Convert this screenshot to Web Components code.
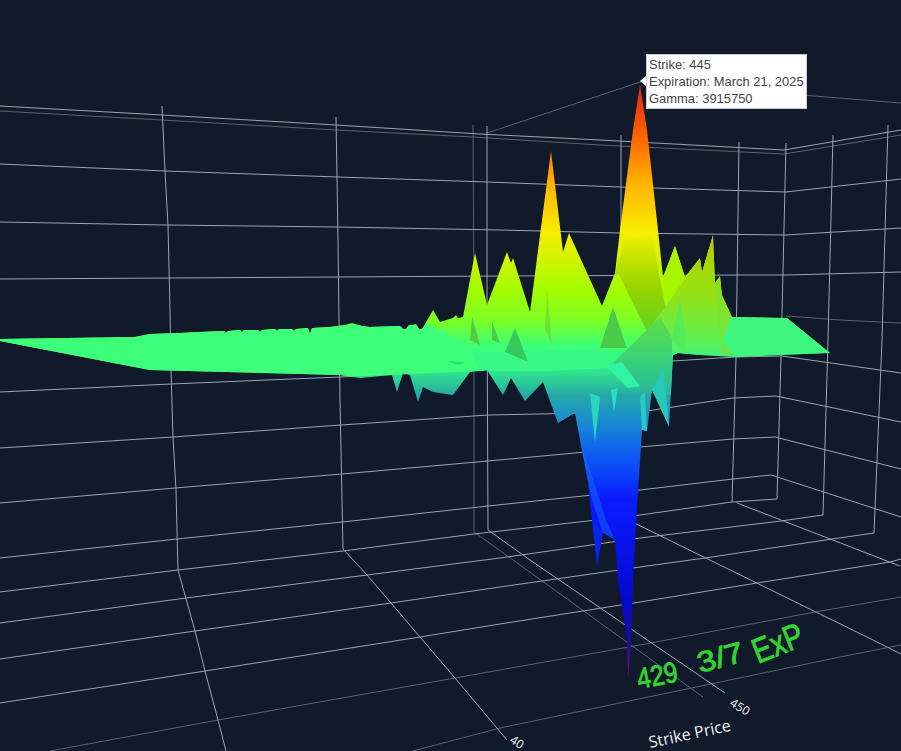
<!DOCTYPE html>
<html>
<head>
<meta charset="utf-8">
<title>Gamma surface</title>
<style>
    html, body { margin: 0; padding: 0; background: #101a2a; }
</style>
</head>
<body>

<plot-scene>
    <plot-grid></plot-grid>
    <plot-mesh></plot-mesh>
    <axis-labels></axis-labels>
    <ink-note></ink-note>
    <hover-tip>
        <div>Strike: 445</div>
        <div>Expiration: March 21, 2025</div>
        <div>Gamma: 3915750</div>
    </hover-tip>
</plot-scene>

<script>
class PlotScene extends HTMLElement {

    constructor() {
        super();
        this.shadow = this.attachShadow({ mode: 'open' });
    }

    connectedCallback() {
        this.shadow.innerHTML =
        `
        <style>
            :host{
                background-color: #101a2a;
                display: block;
                height: 751px;
                overflow: hidden;
                position: relative;
                width: 901px;
            }
        </style>
        <slot></slot>
        `;
    }
}

// every line of the 3d box, as [x,y] runs across the canvas
const BRIGHT_LINES = [
    // left wall, verticals
    "162,106 165,171 168,225 170,310 171,370 173,437 176,490 178,570",
    "336,117 338,240 340,400 341,450 343,549",
    "487,126 487,300 488,530",
    // right wall, verticals
    "621,135 621,505",
    "739,142 736,357 732,502",
    "786,143 781,357 777,499",
    "833,135 828,340 823,515",
    "888,125 882,340 874,533",
    // rows on the walls
    "0,106 162,115 336,125 480,134 600,140 784,150 901,130",
    "0,164 165,171 338,177 487,182 620,187 786,192 901,179",
    "0,222 165,225 338,227 500,230 620,233 786,235 901,228",
    "0,279 170,278 338,277 500,276 740,275 786,275 901,272",
    "0,392 171,384 340,377 673,361 735,357 782,356 901,373",
    "0,448 173,437 341,425 488,415 640,412 733,398 776,396 901,422",
    "0,503 175,488 342,474 488,461 640,447 733,439 775,437 901,469",
    "0,558 177,539 342,522 488,506 640,490 733,479 771,475 901,517",
    // floor, across
    "0,592 178,570 343,551 474,534 640,515 732,502 777,499",
    "0,623 186,598 367,575 500,558 640,538 781,521 823,515",
    "0,659 195,631 391,603 500,587 640,567 705,558 832,539 874,533",
    "0,703 205,671 420,637 500,624 640,602 757,583 890,562 901,559",
    // floor, along
    "178,570 195,631 205,671 218,720 226,751",
    "343,549 367,575 391,603 420,637 455,678 507,740",
    "488,530 530,560 725,693",
    "622,517 873,640 901,654",
    "737,503 900,566"
];

const FAINT_LINES = [
    "0,111 162,120 336,130 473,137 600,145 784,154 901,135",
    "473,125 474,300 474,532 513,560 703,697",
    "487,133 640,82",
    "640,82 901,103",
    "786,316 840,320 901,323",
    "50,751 218,720 455,678 640,645 815,612 901,597",
    "413,751 500,728 840,657 901,645"
];

class PlotGrid extends HTMLElement {

    constructor() {
        super();
        this.shadow = this.attachShadow({ mode: 'open' });
    }

    connectedCallback() {
        let bright = BRIGHT_LINES.map(line => `<polyline points="${line}"></polyline>`).join("");
        let faint = FAINT_LINES.map(line => `<polyline points="${line}"></polyline>`).join("");

        this.shadow.innerHTML =
        `
        <style>
            :host{
                display: block;
                inset: 0;
                position: absolute;
            }
            svg{
                display: block;
            }
            polyline{
                fill: none;
                stroke-width: 1;
            }
            .bright polyline{
                stroke: #9ca4b1;
            }
            .faint polyline{
                stroke: #59626f;
            }
        </style>
        <svg width="901" height="751" viewBox="0 0 901 751">
            <g class="faint">${faint}</g>
            <g class="bright">${bright}</g>
        </svg>
        `;
    }
}

const OUTLINE = `0,339 135,337 150,334 180,333 200,332 224,331 226,333 228,331 240,330 242,332 244,330 258,330 260,332
    262,330 275,329 277,331 279,329 292,329 294,331 296,329 308,328 310,334 312,328 330,327 345,325 352,323 362,326
    370,327 400,326 403,329 406,329 409,325 412,325 416,324 419,329 422,329 424,326 433,310 440,322 453,318 456,315
    458,318 463,317 475,253 487,305 507,252 511,263 513,258 530,312 551,151 563,252 569,233 602,306 615,273 620,230
    633,130 640,85 647,130 658,230 663,277 675,246 685,277 700,258 702,272 713,235 715,283 720,276 722,295 732,317
    787,318 830,353 735,357 700,355 678,353 673,355 669,427 652,390 647,431 642,430 637,507 633,580 631,645 628,680
    627,640 618,580 615,540 603,533 597,567 592,520 588,483 580,440 575,413 558,423 543,382 525,401 511,378 503,395
    487,370 470,372 453,395 433,392 423,387 418,402 410,375 403,373 397,392 392,375 360,378 340,375 150,370 0,341`;

class PlotMesh extends HTMLElement {

    constructor() {
        super();
        this.shadow = this.attachShadow({ mode: 'open' });
    }

    connectedCallback() {
        this.shadow.innerHTML =
        `
        <style>
            :host{
                display: block;
                inset: 0;
                position: absolute;
            }
            svg{
                display: block;
            }
        </style>
        <svg width="901" height="751" viewBox="0 0 901 751">
            <defs>
                <linearGradient id="heat" gradientUnits="userSpaceOnUse" x1="0" y1="85" x2="0" y2="685">
                    <stop offset="0" stop-color="#e8200f"></stop>
                    <stop offset="0.092" stop-color="#ff6a00"></stop>
                    <stop offset="0.165" stop-color="#ffb400"></stop>
                    <stop offset="0.245" stop-color="#f7ee00"></stop>
                    <stop offset="0.342" stop-color="#a4fb00"></stop>
                    <stop offset="0.392" stop-color="#7dff25"></stop>
                    <stop offset="0.433" stop-color="#3fff72"></stop>
                    <stop offset="0.47" stop-color="#33ee8c"></stop>
                    <stop offset="0.5" stop-color="#2ac59a"></stop>
                    <stop offset="0.517" stop-color="#25a8a8"></stop>
                    <stop offset="0.56" stop-color="#1a8ccf"></stop>
                    <stop offset="0.61" stop-color="#0f62f0"></stop>
                    <stop offset="0.69" stop-color="#0a1cff"></stop>
                    <stop offset="0.86" stop-color="#0707cf"></stop>
                    <stop offset="0.925" stop-color="#1a0aa0"></stop>
                    <stop offset="0.97" stop-color="#50108a"></stop>
                    <stop offset="1" stop-color="#601080"></stop>
                </linearGradient>
                <linearGradient id="cluster" gradientUnits="userSpaceOnUse" x1="0" y1="235" x2="0" y2="357">
                    <stop offset="0" stop-color="#b4cc00"></stop>
                    <stop offset="0.45" stop-color="#98e010"></stop>
                    <stop offset="0.85" stop-color="#60f050"></stop>
                    <stop offset="1" stop-color="#42f07c"></stop>
                </linearGradient>
                <linearGradient id="front" gradientUnits="userSpaceOnUse" x1="0" y1="317" x2="0" y2="395">
                    <stop offset="0" stop-color="#62dc44"></stop>
                    <stop offset="0.55" stop-color="#38d278"></stop>
                    <stop offset="1" stop-color="#2ab6a0"></stop>
                </linearGradient>
                <linearGradient id="olive" gradientUnits="userSpaceOnUse" x1="0" y1="235" x2="0" y2="320">
                    <stop offset="0" stop-color="#6d6a00" stop-opacity="0"></stop>
                    <stop offset="0.6" stop-color="#6d6a00" stop-opacity="0.26"></stop>
                    <stop offset="1" stop-color="#4f7a00" stop-opacity="0.32"></stop>
                </linearGradient>
                <clipPath id="outline"><polygon points="${OUTLINE}"></polygon></clipPath>
            </defs>

            <polygon points="${OUTLINE}" fill="url(#heat)"></polygon>

            <g clip-path="url(#outline)">
                <!-- flat part of the sheet -->
                <polygon fill="#3dff7a" points="0,325 430,325 470,345 620,345 620,352 600,368 540,371 480,371 340,377 150,372 0,345"></polygon>
                <polygon fill="#38f986" points="470,352 625,348 606,368 545,371 480,371"></polygon>

                <!-- main peak going back into the shade -->
                <polygon fill="url(#olive)" points="615,273 624,240 652,235 664,300 668,320 647,332"></polygon>
                <polygon fill="url(#heat)" points="618,273 647,332 630,352 596,352 600,310"></polygon>

                <!-- peaks at the right -->
                <polygon fill="#a8f500" points="663,277 675,246 685,277 690,300 668,320"></polygon>
                <polygon fill="url(#cluster)" points="647,332 700,258 702,272 713,235 715,283 720,276 722,295 732,317 745,357 700,355 673,355 673,345"></polygon>
                <polygon fill="#7fe030" opacity="0.6" points="715,283 720,276 722,295 740,352 722,355"></polygon>
                <polygon fill="#4ee85e" opacity="0.7" points="672,340 680,300 686,335 684,352"></polygon>
                <polygon fill="#3ef580" points="732,317 787,318 830,353 735,357 722,340"></polygon>

                <!-- shaded facets -->
                <polygon fill="#37c95e" points="515,328 505,352 528,362"></polygon>
                <polygon fill="#4acb48" points="613,307 600,348 627,348"></polygon>
                <polygon fill="#4fc84a" points="492,322 500,343 492,340"></polygon>
                <polygon fill="#55cc3c" points="472,317 470,340 480,345"></polygon>
                <polygon fill="#66d22e" opacity="0.55" points="547,290 545,330 552,345"></polygon>
                <polygon fill="#30e070" points="447,361 465,362 458,365"></polygon>

                <!-- sheet front, below the peaks -->
                <polygon fill="url(#front)" points="613,363 660,317 672,338 673,395 640,392 630,378"></polygon>
                <polygon fill="#30f3a4" points="606,366 622,362 640,386 628,388"></polygon>

                <!-- shards hanging off the sheet -->
                <polygon fill="#2bd6c0" points="590,393 595,442 600,397"></polygon>
                <polygon fill="#2bdcc4" points="611,390 614,412 618,388"></polygon>
                <polygon fill="#29c8c0" points="645,392 647,431 642,430 640,396"></polygon>
                <polygon fill="#28c8b4" points="664,372 669,427 652,390 668,360"></polygon>

                <!-- blue spike facets -->
                <polygon fill="#1670ff" opacity="0.45" points="580,440 590,470 606,520 615,540 603,533 592,500"></polygon>
                <polygon fill="#0a2fe8" opacity="0.6" points="592,520 597,567 603,533"></polygon>
            </g>
        </svg>
        `;
    }
}

class AxisLabels extends HTMLElement {

    constructor() {
        super();
        this.shadow = this.attachShadow({ mode: 'open' });
    }

    connectedCallback() {
        this.shadow.innerHTML =
        `
        <style>
            :host{
                display: block;
                inset: 0;
                position: absolute;
            }
            svg{
                display: block;
            }
            text{
                fill: #f0f2f4;
                font-family: "Open Sans", "Liberation Sans", sans-serif;
            }
            .tick{
                font-size: 12px;
            }
            .title{
                font-size: 16px;
            }
        </style>
        <svg width="901" height="751" viewBox="0 0 901 751">
            <text class="tick" transform="translate(729,705) rotate(32)">450</text>
            <text class="tick" transform="translate(509,742) rotate(32)">40</text>
            <text class="title" transform="translate(650,748) rotate(-12)">Strike Price</text>
        </svg>
        `;
    }
}

// the marker notes someone wrote on top of the screenshot
class InkNote extends HTMLElement {

    constructor() {
        super();
        this.shadow = this.attachShadow({ mode: 'open' });
    }

    connectedCallback() {
        this.shadow.innerHTML =
        `
        <style>
            :host{
                display: block;
                inset: 0;
                position: absolute;
            }
            svg{
                display: block;
            }
            text{
                fill: #33d62e;
                font-family: "Liberation Sans", sans-serif;
                font-size: 29px;
                stroke: #33d62e;
                stroke-width: 0.8;
            }
        </style>
        <svg width="901" height="751" viewBox="0 0 901 751">
            <text transform="translate(639,689) rotate(-11)" textLength="41" lengthAdjust="spacingAndGlyphs">429</text>
            <text transform="translate(700,673) rotate(-15)" textLength="47" lengthAdjust="spacingAndGlyphs">3/7</text>
            <text transform="translate(758,664) rotate(-22)" style="font-size:35px" textLength="52" lengthAdjust="spacingAndGlyphs">ExP</text>
        </svg>
        `;
    }
}

class HoverTip extends HTMLElement {

    constructor() {
        super();
        this.shadow = this.attachShadow({ mode: 'open' });
    }

    connectedCallback() {
        this.shadow.innerHTML =
        `
        <style>
            :host{
                background-color: #fff;
                border: 1px solid #c9ced6;
                box-sizing: border-box;
                color: #444;
                display: block;
                font-family: "Liberation Sans", Arial, sans-serif;
                font-size: 12.95px;
                height: 55px;
                left: 646px;
                line-height: 17px;
                padding: 1px 2px;
                position: absolute;
                top: 54px;
                white-space: nowrap;
                width: 161px;
            }
            #notch{
                border-bottom: 5px solid transparent;
                border-right: 6px solid #fff;
                border-top: 5px solid transparent;
                height: 0;
                left: -7px;
                position: absolute;
                top: 21px;
                width: 0;
            }
        </style>
        <div id="notch"></div>
        <slot></slot>
        `;
    }
}

customElements.define('plot-scene', PlotScene);
customElements.define('plot-grid', PlotGrid);
customElements.define('plot-mesh', PlotMesh);
customElements.define('axis-labels', AxisLabels);
customElements.define('ink-note', InkNote);
customElements.define('hover-tip', HoverTip);
</script>
</body>
</html>
